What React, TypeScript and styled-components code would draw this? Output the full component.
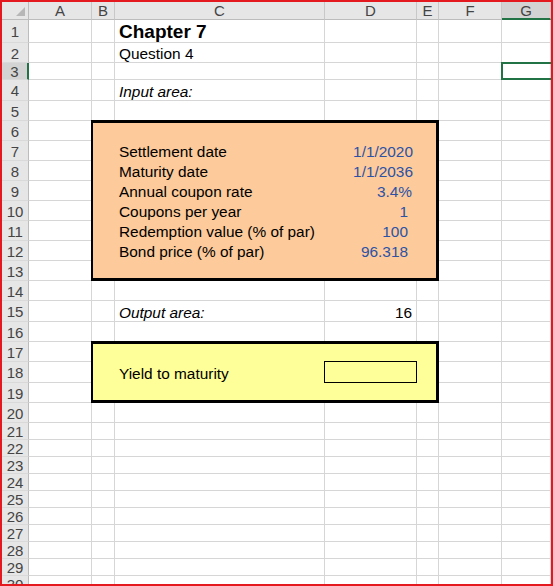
import React from "react";
import styled, { createGlobalStyle } from "styled-components";

const COLUMNS = ["A", "B", "C", "D", "E", "F", "G"];
const COL_WIDTHS = [63, 23, 210, 92, 22, 63];
const ROW_HEIGHTS = [
  23, 20, 17, 21, 20, 20, 20, 20, 20, 20, 20, 20, 20, 20, 21, 20, 20, 21, 20, 20,
  17, 17, 17, 17, 17, 17, 17, 17, 17, 17,
];
const SELECTED_ROW = 3;
const SELECTED_COL = "G";

type CellProps = {
  $r: number;
  $c: number;
  $rs?: number;
  $cs?: number;
};

// row 1 of the grid is the header, column 1 the row numbers
const place = (p: CellProps) => `
  grid-row: ${p.$r + 1} / span ${p.$rs ?? 1};
  grid-column: ${p.$c + 2} / span ${p.$cs ?? 1};
`;

const GlobalStyle = createGlobalStyle`
  html, body {
    margin: 0;
    padding: 0;
    background: #fff;
  }
  body {
    font-family: "Liberation Sans", Arial, sans-serif;
  }
`;

const Frame = styled.div`
  width: 553px;
  height: 586px;
  box-sizing: border-box;
  border: 2px solid #e3191f;
  overflow: hidden;
  background: #fff;
`;

const Sheet = styled.div`
  display: grid;
  grid-template-columns: 27px ${COL_WIDTHS.map((w) => w + "px").join(" ")} 1fr;
  grid-template-rows: 18px ${ROW_HEIGHTS.map((h) => h + "px").join(" ")};
`;

const Corner = styled.div`
  grid-row: 1;
  grid-column: 1;
  position: relative;
  background: #e6e6e6;
  border-right: 1px solid #bcbcbc;
  border-bottom: 1px solid #bcbcbc;
  box-sizing: border-box;

  &::after {
    content: "";
    position: absolute;
    right: 3px;
    bottom: 3px;
    width: 0;
    height: 0;
    border-left: 9px solid transparent;
    border-bottom: 9px solid #b7b7b7;
  }
`;

const ColHeader = styled.div<{ $c: number; $active?: boolean }>`
  grid-row: 1;
  grid-column: ${(p) => p.$c + 2};
  display: flex;
  align-items: center;
  justify-content: center;
  box-sizing: border-box;
  background: ${(p) => (p.$active ? "#d3d3d3" : "#e6e6e6")};
  border-right: 1px solid #c8c8c8;
  border-bottom: ${(p) => (p.$active ? "2px solid #217346" : "1px solid #bcbcbc")};
  color: #444;
  font-size: 15px;
  padding-top: ${(p) => (p.$active ? 1 : 0)}px;
`;

const RowHeader = styled.div<{ $r: number; $active?: boolean }>`
  grid-row: ${(p) => p.$r + 1};
  grid-column: 1;
  display: flex;
  align-items: center;
  justify-content: center;
  box-sizing: border-box;
  background: ${(p) => (p.$active ? "#d3d3d3" : "#e6e6e6")};
  border-right: ${(p) => (p.$active ? "2px solid #217346" : "1px solid #bcbcbc")};
  border-bottom: 1px solid #d9d9d9;
  color: #444;
  font-size: 15px;
  padding-top: 1px;
`;

const GridCell = styled.div<CellProps>`
  ${place}
  box-sizing: border-box;
  border-right: 1px solid #d6d6d6;
  border-bottom: 1px solid #d6d6d6;
`;

const Panel = styled.div<CellProps & { $fill: string }>`
  ${place}
  box-sizing: border-box;
  margin: -1px 0 0 -1px;
  background: ${(p) => p.$fill};
  border: 3px solid #000;
  border-width: 3px 3px 3px 2px;
`;

const AnswerBox = styled.div<CellProps>`
  ${place}
  box-sizing: border-box;
  margin: -1px 0 0 -1px;
  border: 1px solid #000;
`;

const Selection = styled.div<CellProps>`
  ${place}
  box-sizing: border-box;
  margin: -1px -2px 0 -1px;
  border: 2px solid #217346;
`;

const Text = styled.div<
  CellProps & {
    $size?: number;
    $bold?: boolean;
    $italic?: boolean;
    $blue?: boolean;
    $right?: boolean;
    $pr?: number;
  }
>`
  ${place}
  align-self: end;
  justify-self: ${(p) => (p.$right ? "end" : "start")};
  padding: 0 ${(p) => p.$pr ?? 4}px 0 4px;
  font-size: ${(p) => p.$size ?? 15.4}px;
  font-weight: ${(p) => (p.$bold ? 700 : 400)};
  font-style: ${(p) => (p.$italic ? "italic" : "normal")};
  color: ${(p) => (p.$blue ? "#2c52a6" : "#000")};
  white-space: nowrap;
`;

const inputs = [
  { r: 7, label: "Settlement date", value: "1/1/2020", pr: 4 },
  { r: 8, label: "Maturity date", value: "1/1/2036", pr: 4 },
  { r: 9, label: "Annual coupon rate", value: "3.4%", pr: 5 },
  { r: 10, label: "Coupons per year", value: "1", pr: 9 },
  { r: 11, label: "Redemption value (% of par)", value: "100", pr: 9 },
  { r: 12, label: "Bond price (% of par)", value: "96.318", pr: 9 },
];

export default function App() {
  const cells: React.ReactNode[] = [];
  ROW_HEIGHTS.forEach((_, i) => {
    COLUMNS.forEach((_, c) => {
      cells.push(<GridCell key={`${i}-${c}`} $r={i + 1} $c={c} />);
    });
  });

  return (
    <>
      <GlobalStyle />
      <Frame>
        <Sheet>
          <Corner />
          {COLUMNS.map((col, c) => (
            <ColHeader key={col} $c={c} $active={col === SELECTED_COL}>
              {col}
            </ColHeader>
          ))}
          {ROW_HEIGHTS.map((_, i) => (
            <RowHeader key={i} $r={i + 1} $active={i + 1 === SELECTED_ROW}>
              {i + 1}
            </RowHeader>
          ))}
          {cells}

          <Panel $r={6} $c={1} $rs={8} $cs={4} $fill="#fcca9b" />
          <Panel $r={17} $c={1} $rs={3} $cs={4} $fill="#ffff99" />
          <AnswerBox $r={18} $c={3} />
          <Selection $r={SELECTED_ROW} $c={6} />

          <Text $r={1} $c={2} $size={19} $bold>
            Chapter 7
          </Text>
          <Text $r={2} $c={2}>
            Question 4
          </Text>
          <Text $r={4} $c={2} $italic>
            Input area:
          </Text>
          {inputs.map((row) => (
            <React.Fragment key={row.r}>
              <Text $r={row.r} $c={2}>
                {row.label}
              </Text>
              <Text $r={row.r} $c={3} $right $blue $pr={row.pr}>
                {row.value}
              </Text>
            </React.Fragment>
          ))}
          <Text $r={15} $c={2} $italic>
            Output area:
          </Text>
          <Text $r={15} $c={3} $right $pr={5}>
            16
          </Text>
          <Text $r={18} $c={2}>
            Yield to maturity
          </Text>
        </Sheet>
      </Frame>
    </>
  );
}
